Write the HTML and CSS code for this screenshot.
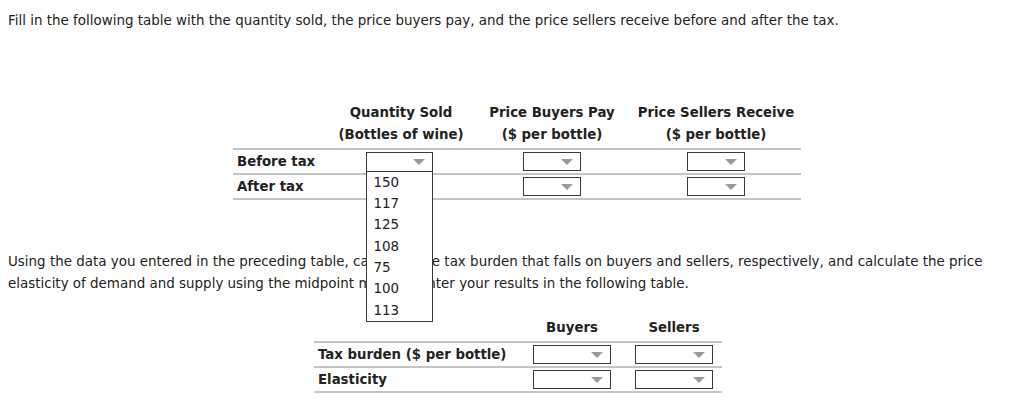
FILE: index.html
```html
<!DOCTYPE html>
<html lang="en">
<head>
  <meta charset="UTF-8">
  <title>Tax table</title>
  <link rel="stylesheet" href="styles.css">
</head>
<body>

  <p class="texto intro">Fill in the following table with the quantity sold, the price buyers pay, and the price sellers receive before and after the tax.</p>

  <table class="tabela tabela-precos">
    <colgroup>
      <col class="c-label">
      <col class="c-qtd">
      <col class="c-comprador">
      <col class="c-vendedor">
    </colgroup>
    <thead>
      <tr>
        <th></th>
        <th>Quantity Sold<br>(Bottles of wine)</th>
        <th>Price Buyers Pay<br>($ per bottle)</th>
        <th>Price Sellers Receive<br>($ per bottle)</th>
      </tr>
    </thead>
    <tbody>
      <tr>
        <td class="rotulo">Before tax</td>
        <td>
          <span class="seletor seletor-qtd aberto">
            <span class="seta"></span>
            <ul class="lista">
              <li>150</li>
              <li>117</li>
              <li>125</li>
              <li>108</li>
              <li>75</li>
              <li>100</li>
              <li>113</li>
            </ul>
          </span>
        </td>
        <td><span class="seletor"><span class="seta"></span></span></td>
        <td><span class="seletor"><span class="seta"></span></span></td>
      </tr>
      <tr>
        <td class="rotulo">After tax</td>
        <td></td>
        <td><span class="seletor"><span class="seta"></span></span></td>
        <td><span class="seletor"><span class="seta"></span></span></td>
      </tr>
    </tbody>
  </table>

  <p class="texto segundo">Using the data you entered in the preceding table, calculate the tax burden that falls on buyers and sellers, respectively, and calculate the price elasticity of demand and supply using the midpoint method. Enter your results in the following table.</p>

  <table class="tabela tabela-carga">
    <colgroup>
      <col class="c-label2">
      <col class="c-comp2">
      <col class="c-vend2">
    </colgroup>
    <thead>
      <tr>
        <th></th>
        <th>Buyers</th>
        <th>Sellers</th>
      </tr>
    </thead>
    <tbody>
      <tr>
        <td class="rotulo">Tax burden ($ per bottle)</td>
        <td><span class="seletor largo"><span class="seta"></span></span></td>
        <td><span class="seletor largo"><span class="seta"></span></span></td>
      </tr>
      <tr>
        <td class="rotulo">Elasticity</td>
        <td><span class="seletor largo"><span class="seta"></span></span></td>
        <td><span class="seletor largo"><span class="seta"></span></span></td>
      </tr>
    </tbody>
  </table>

</body>
</html>
```

FILE: styles.css
```css
body {
  font-family: "DejaVu Sans", Verdana, sans-serif;
  font-size: 13.45px;
  color: #222;
  background: white;
  margin: 0;
  padding: 10px 8px 0 8px;
}

.texto {
  margin: 0;
  line-height: 22px;
}

.tabela {
  border-collapse: collapse;
  table-layout: fixed;
}

.tabela th {
  font-size: 13.3px;
  font-weight: bold;
  text-align: center;
  line-height: 22px;
  padding: 0 0 2px 0;
  border-bottom: 2px solid #c4c4c4;
}

.tabela td {
  height: 23px;
  padding: 0;
  text-align: center;
  vertical-align: middle;
  border-bottom: 2px solid #c4c4c4;
}

.tabela td.rotulo {
  font-size: 13.3px;
  text-align: left;
  font-weight: bold;
  padding-left: 4px;
}

.tabela-precos {
  margin: 70px 0 0 225px;
  width: 568px;
}

.c-label { width: 96px; }
.c-qtd { width: 144px; }
.c-comprador { width: 158px; }
.c-vendedor { width: 170px; }

.segundo {
  margin-top: 51px;
}

.tabela-carga {
  margin: 22px 0 0 306px;
  width: 408px;
}

.c-label2 { width: 204px; }
.c-comp2 { width: 108px; }
.c-vend2 { width: 96px; }

.seletor {
  position: relative;
  display: inline-block;
  vertical-align: middle;
  width: 56px;
  height: 17px;
  border: 1px solid #3a3a3a;
  background: white;
}

.seletor-qtd {
  width: 65px;
  height: 18px;
  margin-right: 4px;
}

.largo {
  width: 76px;
}

.seta {
  position: absolute;
  right: 7px;
  top: 6px;
  width: 0;
  height: 0;
  border-left: 6.5px solid transparent;
  border-right: 6.5px solid transparent;
  border-top: 6px solid #9a9a9a;
}

.lista {
  position: absolute;
  left: -1px;
  top: 18px;
  width: 65px;
  margin: 0;
  padding: 0;
  list-style: none;
  background: white;
  border: 1px solid #3a3a3a;
  text-align: left;
  z-index: 5;
}

.lista li {
  height: 21.4px;
  line-height: 21.4px;
  padding-left: 7px;
}
```
